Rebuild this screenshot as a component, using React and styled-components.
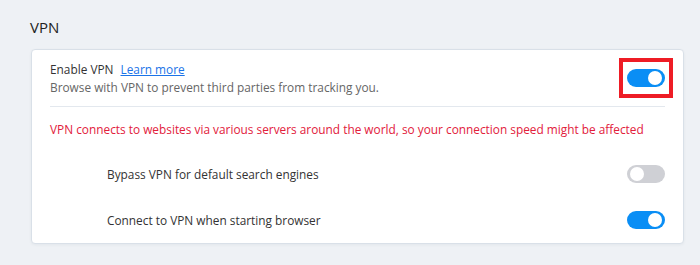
import React, { useState } from "react";
import styled, { createGlobalStyle } from "styled-components";

const GlobalStyle = createGlobalStyle`
  html, body {
    margin: 0;
    padding: 0;
    background: #eef1f5;
    font-family: "Open Sans", "Noto Sans", sans-serif;
  }
`;

const Page = styled.div`
  width: 700px;
  height: 265px;
  padding: 18px 16px 0 31px;
  box-sizing: border-box;
  background: #eef1f5;
`;

const Heading = styled.h2`
  margin: 0 0 12px -1px;
  font-size: 15px;
  font-weight: 400;
  color: #222;
  line-height: 19px;
`;

const Card = styled.div`
  width: 653px;
  box-sizing: border-box;
  background: #fff;
  border: 1px solid #d9e0e8;
  border-radius: 4px;
  box-shadow: 0 1px 3px rgba(40, 60, 90, 0.06);
  padding: 10px 18px 0 18px;
`;

const TopRow = styled.div`
  display: flex;
  align-items: center;
  justify-content: space-between;
  padding-bottom: 10px;
  border-bottom: 1px solid #e3e8ee;
`;

const Label = styled.div`
  font-size: 11.85px;
  line-height: 18px;
  color: #333;
`;

const Link = styled.a`
  margin-left: 7px;
  color: #1a73e8;
  text-decoration: underline;
  cursor: pointer;
`;

const Hint = styled.div`
  font-size: 11.85px;
  line-height: 18px;
  color: #666;
`;

const Highlight = styled.div`
  border: 4px solid #ee1c25;
  padding: 7px 4px;
  margin: -6px -8px -6px 0;
  display: flex;
`;

const Warning = styled.div`
  font-size: 11.85px;
  line-height: 18px;
  color: #e2203b;
  padding-top: 13px;
`;

const OptionRow = styled.div`
  display: flex;
  align-items: center;
  justify-content: space-between;
  height: 46px;
  padding-left: 57px;
  margin-top: ${(p) => (p.$first ? "13px" : "0")};
`;

const Track = styled.button`
  position: relative;
  width: 38px;
  height: 18px;
  border: none;
  padding: 0;
  border-radius: 9px;
  background: ${(p) => (p.$on ? "#0a8ef5" : "#cfd0d5")};
  cursor: pointer;
  flex-shrink: 0;
`;

const Knob = styled.span`
  position: absolute;
  top: 2px;
  left: ${(p) => (p.$on ? "21px" : "3px")};
  width: 14px;
  height: 14px;
  border-radius: 50%;
  background: #fff;
`;

const Toggle = ({ on, onClick }) => (
  <Track $on={on} onClick={onClick}>
    <Knob $on={on} />
  </Track>
);

export default function App() {
  const [vpn, setVpn] = useState(true);
  const [bypass, setBypass] = useState(false);
  const [startup, setStartup] = useState(true);

  return (
    <Page>
      <GlobalStyle />
      <Heading>VPN</Heading>
      <Card>
        <TopRow>
          <div>
            <Label>
              Enable VPN<Link>Learn more</Link>
            </Label>
            <Hint>Browse with VPN to prevent third parties from tracking you.</Hint>
          </div>
          <Highlight>
            <Toggle on={vpn} onClick={() => setVpn(!vpn)} />
          </Highlight>
        </TopRow>
        <Warning>
          VPN connects to websites via various servers around the world, so your connection speed might be affected
        </Warning>
        <OptionRow $first>
          <Label>Bypass VPN for default search engines</Label>
          <Toggle on={bypass} onClick={() => setBypass(!bypass)} />
        </OptionRow>
        <OptionRow>
          <Label>Connect to VPN when starting browser</Label>
          <Toggle on={startup} onClick={() => setStartup(!startup)} />
        </OptionRow>
      </Card>
    </Page>
  );
}
